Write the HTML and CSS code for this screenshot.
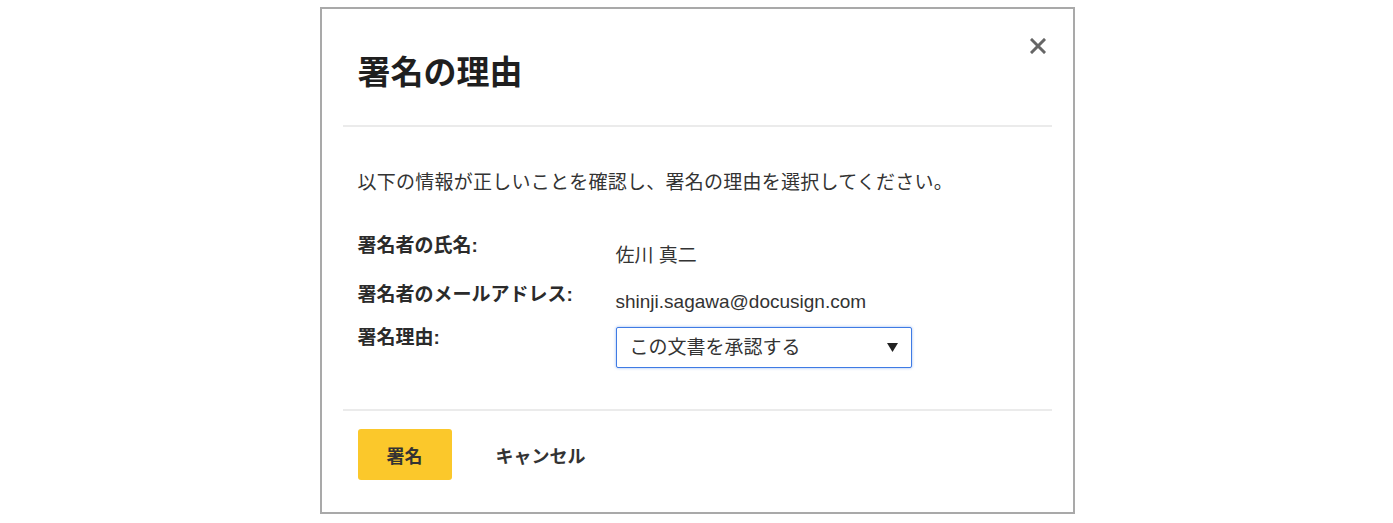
FILE: index.html
```html
<!DOCTYPE html>
<html lang="ja">
<head>
<meta charset="utf-8">
<title>署名の理由</title>
<link rel="stylesheet" href="styles.css">
</head>
<body>
<div class="modal">
  <div class="modal-header">
    <h1 class="modal-title">署名の理由</h1>
    <button class="close-btn" aria-label="閉じる">
      <svg width="16" height="16" viewBox="0 0 16 16"><path d="M2 2 L14 14 M14 2 L2 14" stroke="#666" stroke-width="3" stroke-linecap="square" fill="none"/></svg>
    </button>
  </div>
  <div class="modal-body">
    <p class="intro">以下の情報が正しいことを確認し、署名の理由を選択してください。</p>
    <div class="row row-name">
      <div class="label">署名者の氏名:</div>
      <div class="value">佐川 真二</div>
    </div>
    <div class="row row-email">
      <div class="label">署名者のメールアドレス:</div>
      <div class="value">shinji.sagawa@docusign.com</div>
    </div>
    <div class="row row-reason">
      <div class="label">署名理由:</div>
      <div class="value">
        <div class="select">
          <span class="select-text">この文書を承認する</span>
          <svg class="select-arrow" width="11" height="9" viewBox="0 0 11 9"><path d="M0 0 H11 L5.5 9 Z" fill="#222"/></svg>
        </div>
      </div>
    </div>
  </div>
  <div class="modal-footer">
    <button class="btn btn-primary">署名</button>
    <button class="btn btn-link">キャンセル</button>
  </div>
</div>
</body>
</html>
```
FILE: styles.css
```css
* { box-sizing: border-box; }
html, body { margin: 0; padding: 0; background: #fff; }
body {
  font-family: "Liberation Sans", "Noto Sans CJK JP", sans-serif;
  color: #333;
  display: flex;
  justify-content: center;
  padding-top: 7px;
  padding-left: 1px;
}
.modal {
  width: 755px;
  border: 2px solid #a9a9a9;
  background: #fff;
  padding: 0 21px;
}
.modal-header {
  display: flex;
  justify-content: space-between;
  align-items: flex-start;
  padding: 29px 6px 32px 15px;
  border-bottom: 2px solid #ebebeb;
}
.modal-title {
  margin: 15px 0 0 0;
  font-size: 33px;
  line-height: 40px;
  font-weight: 700;
  color: #1f1f1f;
}
.close-btn {
  border: 0;
  background: none;
  padding: 0;
  width: 16px;
  height: 16px;
  display: block;
  cursor: pointer;
}
.close-btn svg { display: block; }
.modal-body {
  padding: 43px 15px 41px 15px;
  border-bottom: 2px solid #ebebeb;
  font-size: 19px;
  line-height: 26px;
}
.intro {
  margin: 0 0 37px 0;
  color: #333;
  letter-spacing: 0.25px;
}
.row {
  display: flex;
  align-items: flex-start;
}
.label {
  width: 258px;
  flex: none;
  font-weight: 700;
  color: #2b2b2b;
  font-size: 19px;
}
.value { color: #333; }
.row-name .value { margin-top: 10px; }
.row-email { margin-top: 13px; }
.row-email .value { margin-top: 7px; }
.row-reason { margin-top: 10px; }
.row-reason .value { margin-top: 2px; }
.select {
  width: 296px;
  height: 41px;
  border: 1px solid #3f7be4;
  border-radius: 2px;
  box-shadow: 0 0 3px rgba(63, 123, 228, 0.55);
  display: flex;
  align-items: center;
  justify-content: space-between;
  padding: 0 13px 0 13px;
  background: #fff;
}
.select-text { color: #333; }
.select-arrow { display: block; }
.modal-footer {
  display: flex;
  align-items: center;
  padding: 18px 15px 32px 15px;
}
.btn {
  font-family: "Liberation Sans", "Noto Sans CJK JP", sans-serif;
  font-size: 18px;
  font-weight: 700;
  color: #333;
  border: 0;
  cursor: pointer;
}
.btn-primary {
  width: 94px;
  height: 51px;
  background: #fbc82b;
  border-radius: 3px;
}
.btn-link {
  background: none;
  margin-left: 44px;
  padding: 0;
  height: 51px;
}
```
